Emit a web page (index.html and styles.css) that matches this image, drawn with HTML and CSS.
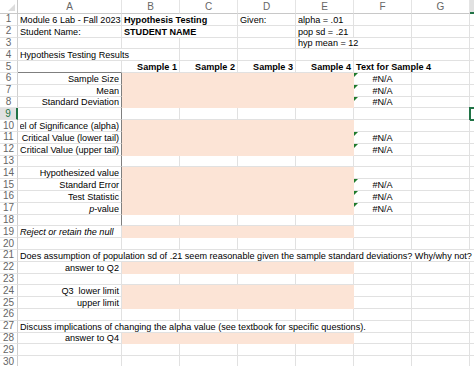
FILE: index.html
```html
<!doctype html>
<html>
	<head>
		<title>Module 6 Lab</title>
		<meta charset="utf-8" />
		<link rel="stylesheet" href="styles.css">
	</head>
	<body>
		<table class="sheet">
			<colgroup>
				<col class="c-rh"><col class="c-a"><col class="c-n"><col class="c-n"><col class="c-n"><col class="c-n"><col class="c-n"><col class="c-n"><col class="c-n">
			</colgroup>
			<tr class="colhead"><th class="corner"></th><th>A</th><th>B</th><th>C</th><th>D</th><th>E</th><th>F</th><th>G</th><th class="on">H</th></tr>
			<tr><th>1</th><td>Module 6 Lab - Fall 2023</td><td colspan="2" class="b">Hypothesis Testing</td><td>Given:</td><td>alpha = .01</td><td></td><td></td><td></td></tr>
			<tr><th>2</th><td>Student Name:</td><td colspan="2" class="b name">STUDENT NAME</td><td></td><td>pop sd = .21</td><td></td><td></td><td></td></tr>
			<tr><th>3</th><td></td><td></td><td></td><td></td><td colspan="2">hyp mean = 12</td><td></td><td></td></tr>
			<tr><th>4</th><td colspan="2">Hypothesis Testing Results</td><td></td><td></td><td></td><td></td><td></td><td></td></tr>
			<tr><th>5</th><td class="under"></td><td class="b r">Sample 1</td><td class="b r">Sample 2</td><td class="b r">Sample 3</td><td class="b r">Sample 4</td><td colspan="2" class="b">Text for Sample 4</td><td></td></tr>
			<tr><th>6</th><td class="r edge">Sample Size</td><td colspan="4" class="fill"></td><td class="err">#N/A</td><td></td><td></td></tr>
			<tr><th>7</th><td class="r edge">Mean</td><td colspan="4" class="fill"></td><td class="err">#N/A</td><td></td><td></td></tr>
			<tr><th>8</th><td class="r edge">Standard Deviation</td><td colspan="4" class="fill"></td><td class="err">#N/A</td><td></td><td></td></tr>
			<tr><th class="on">9</th><td class="edge"></td><td></td><td></td><td></td><td></td><td></td><td></td><td class="active"></td></tr>
			<tr><th>10</th><td class="edge"><div class="clip"><span>Level of Significance (alpha)</span></div></td><td colspan="4" class="fill"></td><td></td><td></td><td></td></tr>
			<tr><th>11</th><td class="r edge">Critical Value (lower tail)</td><td colspan="4" class="fill"></td><td class="err">#N/A</td><td></td><td></td></tr>
			<tr><th>12</th><td class="r edge">Critical Value (upper tail)</td><td colspan="4" class="fill"></td><td class="err">#N/A</td><td></td><td></td></tr>
			<tr><th>13</th><td class="edge"></td><td></td><td></td><td></td><td></td><td></td><td></td><td></td></tr>
			<tr><th>14</th><td class="r edge">Hypothesized value</td><td colspan="4" class="fill"></td><td></td><td></td><td></td></tr>
			<tr><th>15</th><td class="r edge">Standard Error</td><td colspan="4" class="fill"></td><td class="err">#N/A</td><td></td><td></td></tr>
			<tr><th>16</th><td class="r edge">Test Statistic</td><td colspan="4" class="fill"></td><td class="err">#N/A</td><td></td><td></td></tr>
			<tr><th>17</th><td class="r edge"><i>p</i>-value</td><td colspan="4" class="fill"></td><td class="err">#N/A</td><td></td><td></td></tr>
			<tr><th>18</th><td class="edge"></td><td></td><td></td><td></td><td></td><td></td><td></td><td></td></tr>
			<tr><th>19</th><td><i>Reject or retain the null</i></td><td colspan="4" class="fill"></td><td></td><td></td><td></td></tr>
			<tr><th>20</th><td></td><td></td><td></td><td></td><td></td><td></td><td></td><td></td></tr>
			<tr><th>21</th><td colspan="8">Does assumption of population sd of .21 seem reasonable given the sample standard deviations? Why/why not?</td></tr>
			<tr><th>22</th><td class="r">answer to Q2</td><td colspan="4" class="fill"></td><td></td><td></td><td></td></tr>
			<tr><th>23</th><td></td><td></td><td></td><td></td><td></td><td></td><td></td><td></td></tr>
			<tr><th>24</th><td class="r">Q3  lower limit</td><td colspan="4" class="fill"></td><td></td><td></td><td></td></tr>
			<tr><th>25</th><td class="r">upper limit</td><td colspan="4" class="fill"></td><td></td><td></td><td></td></tr>
			<tr><th>26</th><td></td><td></td><td></td><td></td><td></td><td></td><td></td><td></td></tr>
			<tr><th>27</th><td colspan="6">Discuss implications of changing the alpha value (see textbook for specific questions).</td><td></td><td></td></tr>
			<tr><th>28</th><td class="r">answer to Q4</td><td colspan="4" class="fill"></td><td></td><td></td><td></td></tr>
			<tr><th>29</th><td></td><td></td><td></td><td></td><td></td><td></td><td></td><td></td></tr>
			<tr><th>30</th><td></td><td></td><td></td><td></td><td></td><td></td><td></td><td></td></tr>
		</table>
	</body>
</html>
```

FILE: styles.css
```css
* { margin: 0; padding: 0; box-sizing: border-box; }
body { background: #fff; overflow: hidden; font-family: "Liberation Sans", Arial, sans-serif; }
.sheet { table-layout: fixed; width: 528px; border-collapse: separate; border-spacing: 0; }
.c-rh { width: 18px; }
.c-a { width: 104px; }
.c-n { width: 58px; }
.sheet tr { height: 11.8px; }
.sheet tr.colhead { height: 13px; }
.sheet td { font-size: 9.1px; line-height: 10px; padding: 0 2px; color: #000; white-space: pre; overflow: hidden; vertical-align: bottom; border-right: 1px solid #e1e1e1; border-bottom: 1px solid #e1e1e1; position: relative; }
.sheet th { font-weight: normal; font-size: 10px; line-height: 10px; color: #666; background: #fff; text-align: center; vertical-align: middle; border-right: 1px solid #cfcfcf; border-bottom: 1px solid #e4e4e4; overflow: hidden; }
.colhead th { line-height: 12px; border-bottom: 1px solid #c8c8c8; border-right: 1px solid #e4e4e4; }
.colhead th.corner { border-right: 1px solid #c8c8c8; position: relative; }
.corner::after { content: ""; position: absolute; right: 2px; bottom: 2px; border-left: 7px solid transparent; border-bottom: 7px solid #dcdcdc; }
.colhead th.on { background: #e1e1e1; color: #217346; border-bottom: 2px solid #217346; }
th.on { background: #e1e1e1; color: #217346; border-right: 2px solid #217346; }
.b { font-weight: bold; }
.r { text-align: right; }
.name { color: #e9772e; }
.sheet td.fill { background: #fce4d6; border-color: #fce4d6; }
.sheet td.edge { border-right: 1px solid #7f7f7f; }
.sheet td.under { border-bottom: 1px solid #7f7f7f; }
.sheet td.err { text-align: center; }
.err::before { content: ""; position: absolute; left: 0; top: 0; border-top: 4px solid #1f7a2c; border-right: 4px solid transparent; }
.sheet td.active { outline: 2px solid #217346; outline-offset: -1px; }
.clip { display: flex; justify-content: flex-end; overflow: hidden; }
.clip span { flex: none; }
```
